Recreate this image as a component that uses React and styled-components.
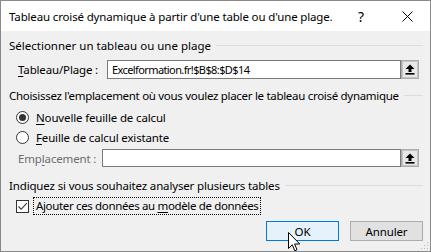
import styled, { createGlobalStyle } from "styled-components";

const GlobalStyle = createGlobalStyle`
  html, body {
    margin: 0;
    padding: 0;
    background: #ffffff;
  }
  * {
    box-sizing: border-box;
  }
`;

const Window = styled.div`
  position: relative;
  width: 431px;
  height: 252px;
  border: 1px solid #8a8a8a;
  background: #f0f0f0;
  font-family: "Noto Sans", "Open Sans", sans-serif;
  font-size: 11.5px;
  letter-spacing: -0.15px;
  color: #000;
  overflow: hidden;
  display: flex;
  flex-direction: column;
`;

const TitleBar = styled.div`
  height: 30px;
  background: #ffffff;
  display: flex;
  align-items: center;
  padding-left: 8px;
`;

const Title = styled.div`
  flex: 1;
  white-space: nowrap;
`;

const TitleButton = styled.div`
  width: ${(p) => p.w}px;
  height: 30px;
  display: flex;
  align-items: center;
  justify-content: center;
  font-size: 14px;
`;

const Body = styled.div`
  flex: 1;
  display: flex;
  flex-direction: column;
  padding: 6px 7px 0 8px;
`;

const GroupHeader = styled.div`
  height: 16px;
  display: flex;
  align-items: center;
  gap: 5px;
  margin-top: ${(p) => p.mt || 0}px;
  white-space: nowrap;
  letter-spacing: ${(p) => p.ls ?? -0.15}px;

  &::after {
    content: "";
    flex: 1;
    height: 1px;
    background: #dcdcdc;
    margin-top: 1px;
  }
`;

const FieldRow = styled.div`
  display: flex;
  align-items: center;
  height: ${(p) => p.h}px;
  margin-top: ${(p) => p.mt}px;
  padding-left: 9px;
  padding-right: ${(p) => p.pr}px;
`;

const Label = styled.label`
  width: ${(p) => p.w}px;
  color: ${(p) => (p.disabled ? "#6d6d6d" : "#000")};
  white-space: nowrap;
`;

const Key = styled.span`
  text-decoration: underline;
  text-underline-offset: 2px;
`;

const Input = styled.div`
  flex: 1;
  height: 100%;
  background: #ffffff;
  border: 1px solid #7a7a7a;
  display: flex;
  align-items: center;
  padding-left: 4px;
  font-size: 11px;
  letter-spacing: -0.6px;
  white-space: nowrap;
`;

const PickButton = styled.div`
  width: 18px;
  height: 100%;
  background: #e8e8e8;
  border: 1px solid #adadad;
  box-shadow: inset 0 0 0 1px #c4c4c4;
  display: flex;
  align-items: center;
  justify-content: center;
`;

const OptionRow = styled.div`
  display: flex;
  align-items: center;
  height: 16px;
  margin-top: ${(p) => p.mt}px;
  padding-left: 7px;
  gap: 7px;
`;

const Radio = styled.span`
  width: 13px;
  height: 13px;
  border-radius: 50%;
  border: 1px solid #333;
  background: #fff;
  display: flex;
  align-items: center;
  justify-content: center;

  &::after {
    content: "";
    width: 7px;
    height: 7px;
    border-radius: 50%;
    background: ${(p) => (p.checked ? "#333" : "transparent")};
  }
`;

const CheckBox = styled.span`
  width: 13px;
  height: 13px;
  border: 1px solid #333;
  background: #fff;
  display: flex;
  align-items: center;
  justify-content: center;
`;

const Focus = styled.span`
  display: inline-block;
  height: 18px;
  line-height: 16px;
  padding: 0 1px 0 2px;
  margin-left: -3px;
  border: 1px dotted #000;
  letter-spacing: -0.35px;
  white-space: nowrap;
`;

const ButtonRow = styled.div`
  display: flex;
  justify-content: flex-end;
  gap: 11px;
  margin-top: 7px;
`;

const Button = styled.div`
  width: 73px;
  height: 20px;
  display: flex;
  align-items: center;
  justify-content: center;
  background: ${(p) => (p.primary ? "#e5f1fb" : "#e1e1e1")};
  border: 1px solid ${(p) => (p.primary ? "#0078d7" : "#adadad")};
`;

const Cursor = styled.svg`
  position: absolute;
  left: 287px;
  top: 231px;
`;

const Grip = styled.svg`
  position: absolute;
  right: 1px;
  bottom: 1px;
`;

const UpArrow = () => (
  <svg width="10" height="11" viewBox="0 0 10 11">
    <path d="M5 0.5 L9.5 5 L6.5 5 L6.5 8 L3.5 8 L3.5 5 L0.5 5 Z" fill="#000" />
    <rect x="0.5" y="9" width="9" height="1.6" fill="#000" />
  </svg>
);

export default function App() {
  return (
    <>
      <GlobalStyle />
      <Window>
        <TitleBar>
          <Title>Tableau croisé dynamique à partir d'une table ou d'une plage.</Title>
          <TitleButton w={46}>?</TitleButton>
          <TitleButton w={46}>
            <svg width="11" height="11" viewBox="0 0 11 11">
              <path d="M0.5 0.5 L10.5 10.5 M10.5 0.5 L0.5 10.5" stroke="#000" strokeWidth="1" />
            </svg>
          </TitleButton>
        </TitleBar>
        <Body>
          <GroupHeader ls={0}>Sélectionner un tableau ou une plage</GroupHeader>
          <FieldRow h={19} mt={7} pr={4}>
            <Label w={89}>
              <Key>T</Key>ableau/Plage :
            </Label>
            <Input>Excelformation.fr!$B$8:$D$14</Input>
            <PickButton>
              <UpArrow />
            </PickButton>
          </FieldRow>

          <GroupHeader mt={8} ls={-0.3}>
            Choisissez l'emplacement où vous voulez placer le tableau croisé dynamique
          </GroupHeader>
          <OptionRow mt={6}>
            <Radio checked />
            <span>
              <Key>N</Key>ouvelle feuille de calcul
            </span>
          </OptionRow>
          <OptionRow mt={4}>
            <Radio />
            <span>
              <Key>F</Key>euille de calcul existante
            </span>
          </OptionRow>
          <FieldRow h={18} mt={4} pr={4}>
            <Label w={84} disabled>
              Emp<Key>l</Key>acement :
            </Label>
            <Input />
            <PickButton>
              <UpArrow />
            </PickButton>
          </FieldRow>

          <GroupHeader mt={10}>Indiquez si vous souhaitez analyser plusieurs tables</GroupHeader>
          <OptionRow mt={5}>
            <CheckBox>
              <svg width="11" height="11" viewBox="0 0 11 11">
                <path d="M1.5 5.5 L4.2 8.3 L9.8 2.2" stroke="#333" strokeWidth="1.1" fill="none" />
              </svg>
            </CheckBox>
            <Focus>
              Ajouter ces données au <Key>m</Key>odèle de données
            </Focus>
          </OptionRow>

          <ButtonRow>
            <Button primary>OK</Button>
            <Button>Annuler</Button>
          </ButtonRow>
        </Body>

        <Cursor width="13" height="21" viewBox="0 0 13 21">
          <path
            d="M0.5 0.5 L0.5 16.5 L4.3 12.8 L6.8 18.8 L9 17.8 L6.6 12 L11.8 12 Z"
            fill="#fff"
            stroke="#000"
            strokeWidth="1"
            strokeLinejoin="miter"
          />
        </Cursor>
        <Grip width="8" height="8" viewBox="0 0 8 8">
          <rect x="6" y="0" width="1" height="1" fill="#b8b8b8" />
          <rect x="3" y="3" width="1" height="1" fill="#b8b8b8" />
          <rect x="6" y="3" width="1" height="1" fill="#b8b8b8" />
          <rect x="0" y="6" width="1" height="1" fill="#b8b8b8" />
          <rect x="3" y="6" width="1" height="1" fill="#b8b8b8" />
          <rect x="6" y="6" width="1" height="1" fill="#b8b8b8" />
        </Grip>
      </Window>
    </>
  );
}
